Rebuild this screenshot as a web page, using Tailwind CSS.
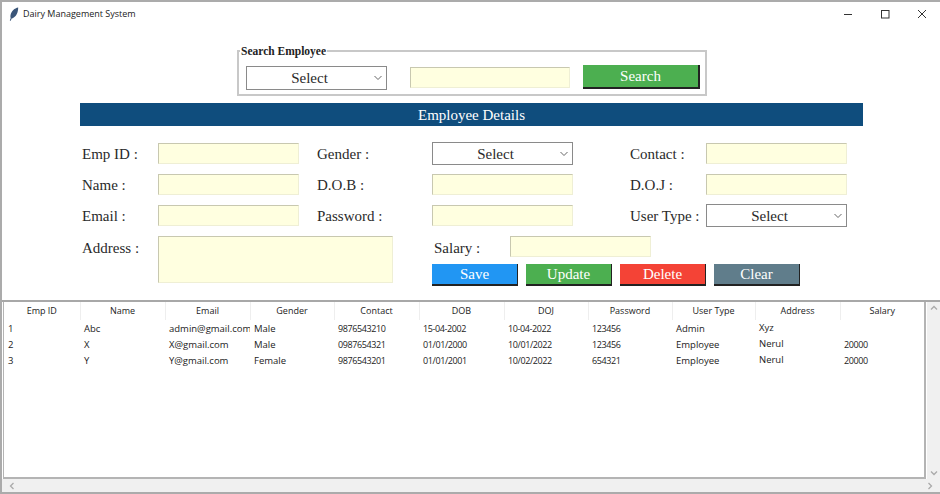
<!DOCTYPE html>
<html>
<head>
<meta charset="utf-8">
<title>Dairy Management System</title>
<script src="https://cdn.jsdelivr.net/npm/@tailwindcss/browser@4"></script>
</head>
<body class="bg-white">
<div class="w-[940px] h-[494px] overflow-hidden flex flex-col bg-white border-t-2 border-l-2 border-b-2 border-[#ababab] font-['Liberation_Serif',serif] text-[15px] text-[#2a2a2a]">
  <!-- title bar -->
  <div class="h-[23px] shrink-0 flex items-center font-['Open_Sans',sans-serif] text-[9px] text-[#222]">
    <svg class="ml-[7px] w-[10px] h-[14px]" viewBox="0 0 10 14"><path d="M9.2 0.4C5.6 1 2.4 4 1.6 7.8 1.3 9.2 1.4 10.2 1.7 11L0.8 13.6 1.8 13.8 2.6 11.6C5.8 11 8 7.8 8.7 4.6 9 3 9.3 1.6 9.2 0.4Z" fill="#3a5578"/></svg>
    <span class="ml-[4px]">Dairy Management System</span>
    <div class="ml-auto flex items-center gap-[27px] pr-[13px]">
      <svg class="w-[10px] h-[10px]" viewBox="0 0 10 10"><path d="M1 5.5H9" stroke="#333" stroke-width="1"/></svg>
      <svg class="w-[10px] h-[10px]" viewBox="0 0 10 10"><rect x="1.5" y="1.5" width="7.5" height="7.5" fill="none" stroke="#333" stroke-width="1"/></svg>
      <svg class="w-[10px] h-[10px]" viewBox="0 0 10 10"><path d="M1 1L9 9M9 1L1 9" stroke="#333" stroke-width="1"/></svg>
    </div>
  </div>

  <!-- search frame -->
  <fieldset class="ml-[235px] mt-[20px] w-[470px] h-[51px] shrink-0 border-2 border-[#c8c8c8] flex">
    <legend class="ml-[1px] px-[1px] text-[11.5px] font-bold leading-[12px] text-[#222]">Search Employee</legend>
    <div class="flex items-start pl-[7px] pt-[9px]">
      <div class="relative w-[141px] h-[24px] border border-[#8a8a8a] flex items-center justify-center pr-[14px] pt-[1px] bg-white">Select
        <svg class="absolute right-[4px] top-[8px] w-[8px] h-[6px]" viewBox="0 0 8 6"><path d="M0.5 1L4 4.5 7.5 1" fill="none" stroke="#666" stroke-width="1"/></svg>
      </div>
      <div class="ml-[23px] mt-[1px] w-[160px] h-[21px] bg-[#ffffe0] border border-[#efefd5] border-t-[#c8c8b0] border-l-[#c8c8b0]"></div>
      <div class="ml-[13px] -mt-[1px] w-[117px] h-[24px] bg-[#4caf50] border-r-2 border-b-2 border-[#222] flex items-center justify-center text-white pt-[1px]">Search</div>
    </div>
  </fieldset>

  <!-- banner -->
  <div class="ml-[78px] mt-[7px] w-[783px] h-[23px] shrink-0 bg-[#0f4d7d] flex items-center justify-center text-white pt-[1px]">Employee Details</div>

  <!-- form -->
  <div class="ml-[80px] mt-[17px] shrink-0 grid grid-cols-[76px_141px_18px_115px_141px_57px_76px_141px] grid-rows-[21px_21px_21px] gap-y-[10px] items-center">
    <div class="pt-[2px]">Emp ID :</div>
    <div class="h-[21px] bg-[#ffffe0] border border-[#efefd5] border-t-[#c8c8b0] border-l-[#c8c8b0]"></div>
    <div></div>
    <div class="pt-[2px]">Gender :</div>
    <div class="relative h-[23px] border border-[#8a8a8a] flex items-center justify-center pr-[14px] pt-[2px] bg-white">Select
      <svg class="absolute right-[4px] top-[8px] w-[8px] h-[6px]" viewBox="0 0 8 6"><path d="M0.5 1L4 4.5 7.5 1" fill="none" stroke="#666" stroke-width="1"/></svg>
    </div>
    <div></div>
    <div class="pt-[2px]">Contact :</div>
    <div class="h-[21px] bg-[#ffffe0] border border-[#efefd5] border-t-[#c8c8b0] border-l-[#c8c8b0]"></div>

    <div class="pt-[2px]">Name :</div>
    <div class="h-[21px] bg-[#ffffe0] border border-[#efefd5] border-t-[#c8c8b0] border-l-[#c8c8b0]"></div>
    <div></div>
    <div class="pt-[2px]">D.O.B :</div>
    <div class="h-[21px] bg-[#ffffe0] border border-[#efefd5] border-t-[#c8c8b0] border-l-[#c8c8b0]"></div>
    <div></div>
    <div class="pt-[2px]">D.O.J :</div>
    <div class="h-[21px] bg-[#ffffe0] border border-[#efefd5] border-t-[#c8c8b0] border-l-[#c8c8b0]"></div>

    <div class="pt-[2px]">Email :</div>
    <div class="h-[21px] bg-[#ffffe0] border border-[#efefd5] border-t-[#c8c8b0] border-l-[#c8c8b0]"></div>
    <div></div>
    <div class="pt-[2px]">Password :</div>
    <div class="h-[21px] bg-[#ffffe0] border border-[#efefd5] border-t-[#c8c8b0] border-l-[#c8c8b0]"></div>
    <div></div>
    <div class="pt-[2px]">User Type :</div>
    <div class="relative h-[23px] border border-[#8a8a8a] flex items-center justify-center pr-[14px] pt-[2px] bg-white">Select
      <svg class="absolute right-[4px] top-[8px] w-[8px] h-[6px]" viewBox="0 0 8 6"><path d="M0.5 1L4 4.5 7.5 1" fill="none" stroke="#666" stroke-width="1"/></svg>
    </div>
  </div>

  <div class="ml-[80px] mt-[10px] shrink-0 flex h-[50px]">
    <div class="w-[76px] leading-[24px]">Address :</div>
    <div class="w-[235px] h-[47px] bg-[#ffffe0] border border-[#efefd5] border-t-[#c8c8b0] border-l-[#c8c8b0]"></div>
    <div class="ml-[39px] flex flex-col">
      <div class="flex items-center h-[21px]">
        <div class="w-[78px] pl-[2px] pt-[3px]">Salary :</div>
        <div class="w-[141px] h-[21px] bg-[#ffffe0] border border-[#efefd5] border-t-[#c8c8b0] border-l-[#c8c8b0]"></div>
      </div>
      <div class="flex gap-[8px] mt-[7px] text-white">
        <div class="w-[86px] h-[22px] bg-[#2196f3] border-r border-b-2 border-[#222] flex items-center justify-center pt-[1px]">Save</div>
        <div class="w-[86px] h-[22px] bg-[#4caf50] border-r border-b-2 border-[#222] flex items-center justify-center pt-[1px]">Update</div>
        <div class="w-[86px] h-[22px] bg-[#f44336] border-r border-b-2 border-[#222] flex items-center justify-center pt-[1px]">Delete</div>
        <div class="w-[86px] h-[22px] bg-[#607d8b] border-r border-b-2 border-[#222] flex items-center justify-center pt-[1px]">Clear</div>
      </div>
    </div>
  </div>

  <!-- table area -->
  <div class="mt-[14px] flex-1 min-h-0 flex flex-col border-t-2 border-[#a8a8a8] font-['Open_Sans',sans-serif] text-[9px] text-[#222]">
    <div class="flex flex-1 min-h-0">
      <div class="ml-[1px] w-[923px] border-l border-r-2 border-b-2 border-[#b4b4b4] overflow-hidden">
        <table class="table-fixed w-[920px] border-collapse">
          <colgroup>
            <col class="w-[76px]"><col class="w-[85px]"><col class="w-[85px]"><col class="w-[84px]"><col class="w-[85px]"><col class="w-[85px]"><col class="w-[84px]"><col class="w-[84px]"><col class="w-[83px]"><col class="w-[85px]"><col class="w-[84px]">
          </colgroup>
          <thead>
            <tr class="h-[18px]">
              <th class="font-normal border-r border-[#eeeeee]">Emp ID</th>
              <th class="font-normal border-r border-[#eeeeee]">Name</th>
              <th class="font-normal border-r border-[#eeeeee]">Email</th>
              <th class="font-normal border-r border-[#eeeeee]">Gender</th>
              <th class="font-normal border-r border-[#eeeeee]">Contact</th>
              <th class="font-normal border-r border-[#eeeeee]">DOB</th>
              <th class="font-normal border-r border-[#eeeeee]">DOJ</th>
              <th class="font-normal border-r border-[#eeeeee]">Password</th>
              <th class="font-normal border-r border-[#eeeeee]">User Type</th>
              <th class="font-normal border-r border-[#eeeeee]">Address</th>
              <th class="font-normal">Salary</th>
            </tr>
          </thead>
          <tbody class="whitespace-nowrap text-[9.5px] leading-[13px] [&_td]:overflow-hidden [&_td]:h-[16px] [&_td]:p-0 [&_td]:pl-[4px] [&_td:nth-child(n+5):nth-child(-n+8)]:text-[9px] [&_td:nth-child(n+5):nth-child(-n+8)]:tracking-[-0.4px] [&_td:nth-child(11)]:text-[9px] [&_td:nth-child(11)]:tracking-[-0.4px]">
            <tr><td>1</td><td>Abc</td><td>admin@gmail.com</td><td>Male</td><td>9876543210</td><td>15-04-2002</td><td>10-04-2022</td><td>123456</td><td>Admin</td><td class="pb-[2px]!">Xyz</td><td></td></tr>
            <tr><td>2</td><td>X</td><td>X@gmail.com</td><td>Male</td><td>0987654321</td><td>01/01/2000</td><td>10/01/2022</td><td>123456</td><td>Employee</td><td class="pb-[2px]!">Nerul</td><td>20000</td></tr>
            <tr><td>3</td><td>Y</td><td>Y@gmail.com</td><td>Female</td><td>9876543201</td><td>01/01/2001</td><td>10/02/2022</td><td>654321</td><td>Employee</td><td class="pb-[2px]!">Nerul</td><td>20000</td></tr>
          </tbody>
        </table>
      </div>
      <!-- vertical scrollbar -->
      <div class="ml-[1px] flex-1 bg-[#f0f0f0] flex flex-col justify-between items-center py-[3px]">
        <svg class="w-[8px] h-[6px]" viewBox="0 0 8 6"><path d="M1 4.5L4 1.5 7 4.5" fill="none" stroke="#aaa" stroke-width="1.3"/></svg>
        <svg class="w-[8px] h-[6px]" viewBox="0 0 8 6"><path d="M1 1.5L4 4.5 7 1.5" fill="none" stroke="#aaa" stroke-width="1.3"/></svg>
      </div>
    </div>
    <!-- horizontal scrollbar -->
    <div class="h-[13px] shrink-0 bg-[#f0f0f0] flex justify-between items-center px-[7px]">
      <svg class="w-[6px] h-[8px]" viewBox="0 0 6 8"><path d="M4.5 1L1.5 4 4.5 7" fill="none" stroke="#aaa" stroke-width="1.3"/></svg>
      <svg class="w-[6px] h-[8px]" viewBox="0 0 6 8"><path d="M1.5 1L4.5 4 1.5 7" fill="none" stroke="#aaa" stroke-width="1.3"/></svg>
    </div>
  </div>
</div>
</body>
</html>
